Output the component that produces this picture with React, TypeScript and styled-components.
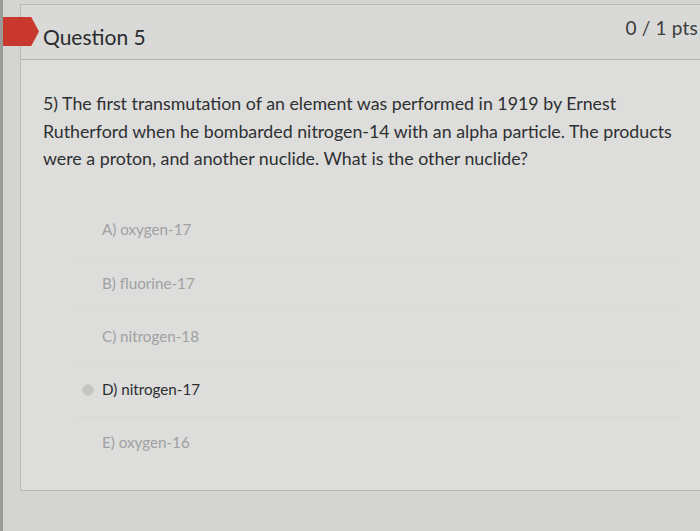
import React from "react";
import styled, { createGlobalStyle } from "styled-components";

const Global = createGlobalStyle`
  html, body { margin: 0; padding: 0; }
  body {
    width: 700px;
    height: 531px;
    overflow: hidden;
    background: #d4d4d2;
    font-family: Lato, "Noto Sans", sans-serif;
  }
`;

const Page = styled.div`
  position: relative;
  width: 700px;
  height: 531px;
  overflow: hidden;
  border-left: 3px solid #9a9a98;
  box-sizing: border-box;
  padding: 4px 0 0 17px;
`;

const Card = styled.div`
  width: 700px;
  border: 1px solid #b9b9b7;
  border-right: none;
  background: #dddddb;
`;

const Header = styled.div`
  height: 55px;
  display: flex;
  align-items: center;
  justify-content: space-between;
  padding: 0 0 0 22px;
  border-bottom: 1px solid #b3b3b1;
  background: #d9d9d7;
  box-sizing: border-box;
`;

const Title = styled.div`
  font-size: 21px;
  color: #2a2c2e;
  margin-top: 8px;
`;

const Points = styled.div`
  font-size: 19px;
  color: #3a3c3e;
  margin-right: 23px;
  margin-top: -10px;
  letter-spacing: 0.2px;
`;

const Flag = styled.div`
  position: absolute;
  left: -3px;
  top: 17px;
  width: 39px;
  height: 29px;
  background: #c8382c;
  clip-path: polygon(0 0, 80% 0, 100% 50%, 80% 100%, 0 100%);
`;

const Body = styled.div`
  padding: 30px 40px 22px 22px;
  height: 430px;
  box-sizing: border-box;
`;

const QuestionText = styled.p`
  margin: 0;
  font-size: 17.8px;
  line-height: 27.5px;
  color: #2e3032;
  max-width: 640px;
`;

const Answers = styled.div`
  margin-top: 31px;
  display: flex;
  flex-direction: column;
`;

const Answer = styled.div<{ $first?: boolean }>`
  height: 53px;
  display: flex;
  align-items: center;
  margin-left: 31px;
  padding-left: 8px;
  gap: 8px;
  border-top: ${(p) => (p.$first ? "none" : "1px solid #d9d9d7")};
  box-sizing: border-box;
`;

const Radio = styled.span<{ $visible?: boolean }>`
  width: 12px;
  height: 12px;
  border-radius: 50%;
  background: ${(p) => (p.$visible ? "#c4c4c2" : "transparent")};
  border: 1px solid ${(p) => (p.$visible ? "#cdcdcb" : "transparent")};
  box-sizing: border-box;
  flex: none;
`;

const AnswerLabel = styled.span<{ $selected?: boolean }>`
  font-size: 15.2px;
  color: ${(p) => (p.$selected ? "#2c2e30" : "#9fa1a2")};
  margin-top: -2px;
`;

const answers = [
  { label: "A) oxygen-17" },
  { label: "B) fluorine-17" },
  { label: "C) nitrogen-18" },
  { label: "D) nitrogen-17", selected: true },
  { label: "E) oxygen-16" },
];

export default function App() {
  return (
    <>
      <Global />
      <Page>
        <Flag />
        <Card>
          <Header>
            <Title>Question 5</Title>
            <Points>0 / 1 pts</Points>
          </Header>
          <Body>
            <QuestionText>
              5) The first transmutation of an element was performed in 1919 by Ernest
              Rutherford when he bombarded nitrogen-14 with an alpha particle. The products
              were a proton, and another nuclide. What is the other nuclide?
            </QuestionText>
            <Answers>
              {answers.map((a, i) => (
                <Answer key={a.label} $first={i === 0}>
                  <Radio $visible={a.selected} />
                  <AnswerLabel $selected={a.selected}>{a.label}</AnswerLabel>
                </Answer>
              ))}
            </Answers>
          </Body>
        </Card>
      </Page>
    </>
  );
}
